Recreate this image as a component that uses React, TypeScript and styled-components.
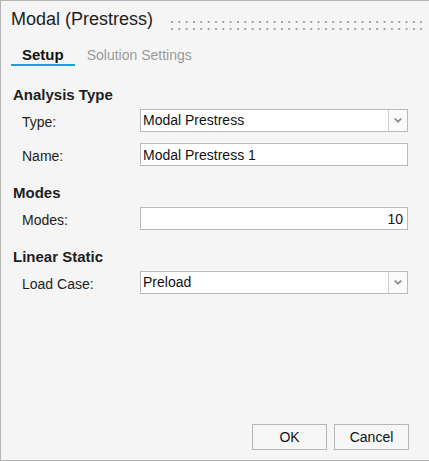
import React, { FC } from "react";
import styled, { createGlobalStyle } from "styled-components";

const GlobalStyle = createGlobalStyle`
  html, body {
    margin: 0;
    padding: 0;
    background: #f5f5f5;
  }

  * {
    box-sizing: border-box;
  }
`;

const FONT = `"Liberation Sans", Arial, sans-serif`;

// dialog frame: border on three sides, footer pushed to the bottom
const Panel = styled.div`
  width: 429px;
  height: 461px;
  display: flex;
  flex-direction: column;
  background: #f5f5f5;
  border: 1px solid #b4b4b4;
  border-right: none;
  font-family: ${FONT};
  color: #1e1e1e;
`;

const TitleBar = styled.div`
  display: flex;
  align-items: flex-start;
  padding: 7px 7px 0 10px;
  height: 29px;
`;

const Title = styled.h1`
  margin: 0;
  font-size: 18px;
  font-weight: normal;
  line-height: 22px;
  white-space: nowrap;
`;

const GripWrap = styled.div`
  flex: 1;
  margin: 8px 0 0 18px;
  height: 9px;
`;

// two rows of small dots used as a drag handle
const Grip: FC = () => (
  <GripWrap>
    <svg width="100%" height="9">
      <defs>
        <pattern id="grip-dots" width="7.33" height="7" patternUnits="userSpaceOnUse">
          <rect x="0" y="0" width="2" height="2" fill="#a4a4a4" />
        </pattern>
      </defs>
      <rect x="0" y="0" width="100%" height="9" fill="url(#grip-dots)" />
    </svg>
  </GripWrap>
);

const TabBar = styled.div`
  display: flex;
  gap: 1px;
  margin: 16px 0 0 10px;
`;

const Tab = styled.div<{ $active?: boolean }>`
  padding: 0 11px;
  height: 20px;
  line-height: 18px;
  font-size: ${(p) => (p.$active ? "15px" : "14px")};
  font-weight: ${(p) => (p.$active ? "bold" : "normal")};
  color: ${(p) => (p.$active ? "#111" : "#9a9a9a")};
  border-bottom: 2px solid ${(p) => (p.$active ? "#1a9fdf" : "transparent")};
`;

const Body = styled.div`
  padding: 20px 0 0 12px;
  display: flex;
  flex-direction: column;
`;

const Section = styled.section`
  & + & {
    margin-top: 18px;
  }
`;

const SectionTitle = styled.h2`
  margin: 0 0 5px;
  font-size: 15px;
  font-weight: bold;
  line-height: 18px;
`;

const Rows = styled.div`
  display: flex;
  flex-direction: column;
  gap: 11px;
`;

const Row = styled.div`
  display: grid;
  grid-template-columns: 118px 268px;
  align-items: center;
  padding-left: 9px;
`;

const Label = styled.label`
  font-size: 14px;
  padding-top: 3px;
`;

const TextField = styled.input<{ $align?: "left" | "right" }>`
  width: 268px;
  height: 23px;
  margin: 0;
  padding: 0 4px 0 2px;
  border: 1px solid #bababa;
  border-radius: 0;
  background: #fff;
  font-family: ${FONT};
  font-size: 14px;
  color: #111;
  text-align: ${(p) => p.$align || "left"};
  outline: none;
`;

const SelectBox = styled.div`
  display: flex;
  width: 268px;
  height: 23px;
  border: 1px solid #bababa;
  background: #fff;
`;

const SelectValue = styled.div`
  flex: 1;
  padding-left: 2px;
  font-size: 14px;
  line-height: 21px;
  color: #111;
`;

const SelectButton = styled.div`
  width: 19px;
  display: flex;
  align-items: center;
  justify-content: center;
  border-left: 1px solid #cfcfcf;
  background: #fafafa;
`;

// heavy down chevron of the drop-down button
const Chevron: FC = () => (
  <svg width="8" height="6" viewBox="0 0 8 6">
    <path d="M0 1 L1.5 0 L4 2.4 L6.5 0 L8 1 L4 5 Z" fill="#8c8c8c" />
  </svg>
);

const Select: FC<{ value: string }> = ({ value }) => (
  <SelectBox>
    <SelectValue>{value}</SelectValue>
    <SelectButton>
      <Chevron />
    </SelectButton>
  </SelectBox>
);

const Footer = styled.div`
  margin-top: auto;
  display: flex;
  justify-content: flex-end;
  gap: 7px;
  padding: 0 20px 10px 0;
`;

const Button = styled.button`
  width: 75px;
  height: 26px;
  margin: 0;
  border: 1px solid #b6b6b6;
  border-radius: 0;
  background: #f6f6f6;
  font-family: ${FONT};
  font-size: 14px;
  color: #111;
`;

const App: FC = () => (
  <>
    <GlobalStyle />
    <Panel>
      <TitleBar>
        <Title>Modal (Prestress)</Title>
        <Grip />
      </TitleBar>

      <TabBar>
        <Tab $active>Setup</Tab>
        <Tab>Solution Settings</Tab>
      </TabBar>

      <Body>
        <Section>
          <SectionTitle>Analysis Type</SectionTitle>
          <Rows>
            <Row>
              <Label>Type:</Label>
              <Select value="Modal Prestress" />
            </Row>
            <Row>
              <Label>Name:</Label>
              <TextField readOnly defaultValue="Modal Prestress 1" />
            </Row>
          </Rows>
        </Section>

        <Section>
          <SectionTitle>Modes</SectionTitle>
          <Rows>
            <Row>
              <Label>Modes:</Label>
              <TextField readOnly defaultValue="10" $align="right" />
            </Row>
          </Rows>
        </Section>

        <Section>
          <SectionTitle>Linear Static</SectionTitle>
          <Rows>
            <Row>
              <Label>Load Case:</Label>
              <Select value="Preload" />
            </Row>
          </Rows>
        </Section>
      </Body>

      <Footer>
        <Button>OK</Button>
        <Button>Cancel</Button>
      </Footer>
    </Panel>
  </>
);

export default App;
